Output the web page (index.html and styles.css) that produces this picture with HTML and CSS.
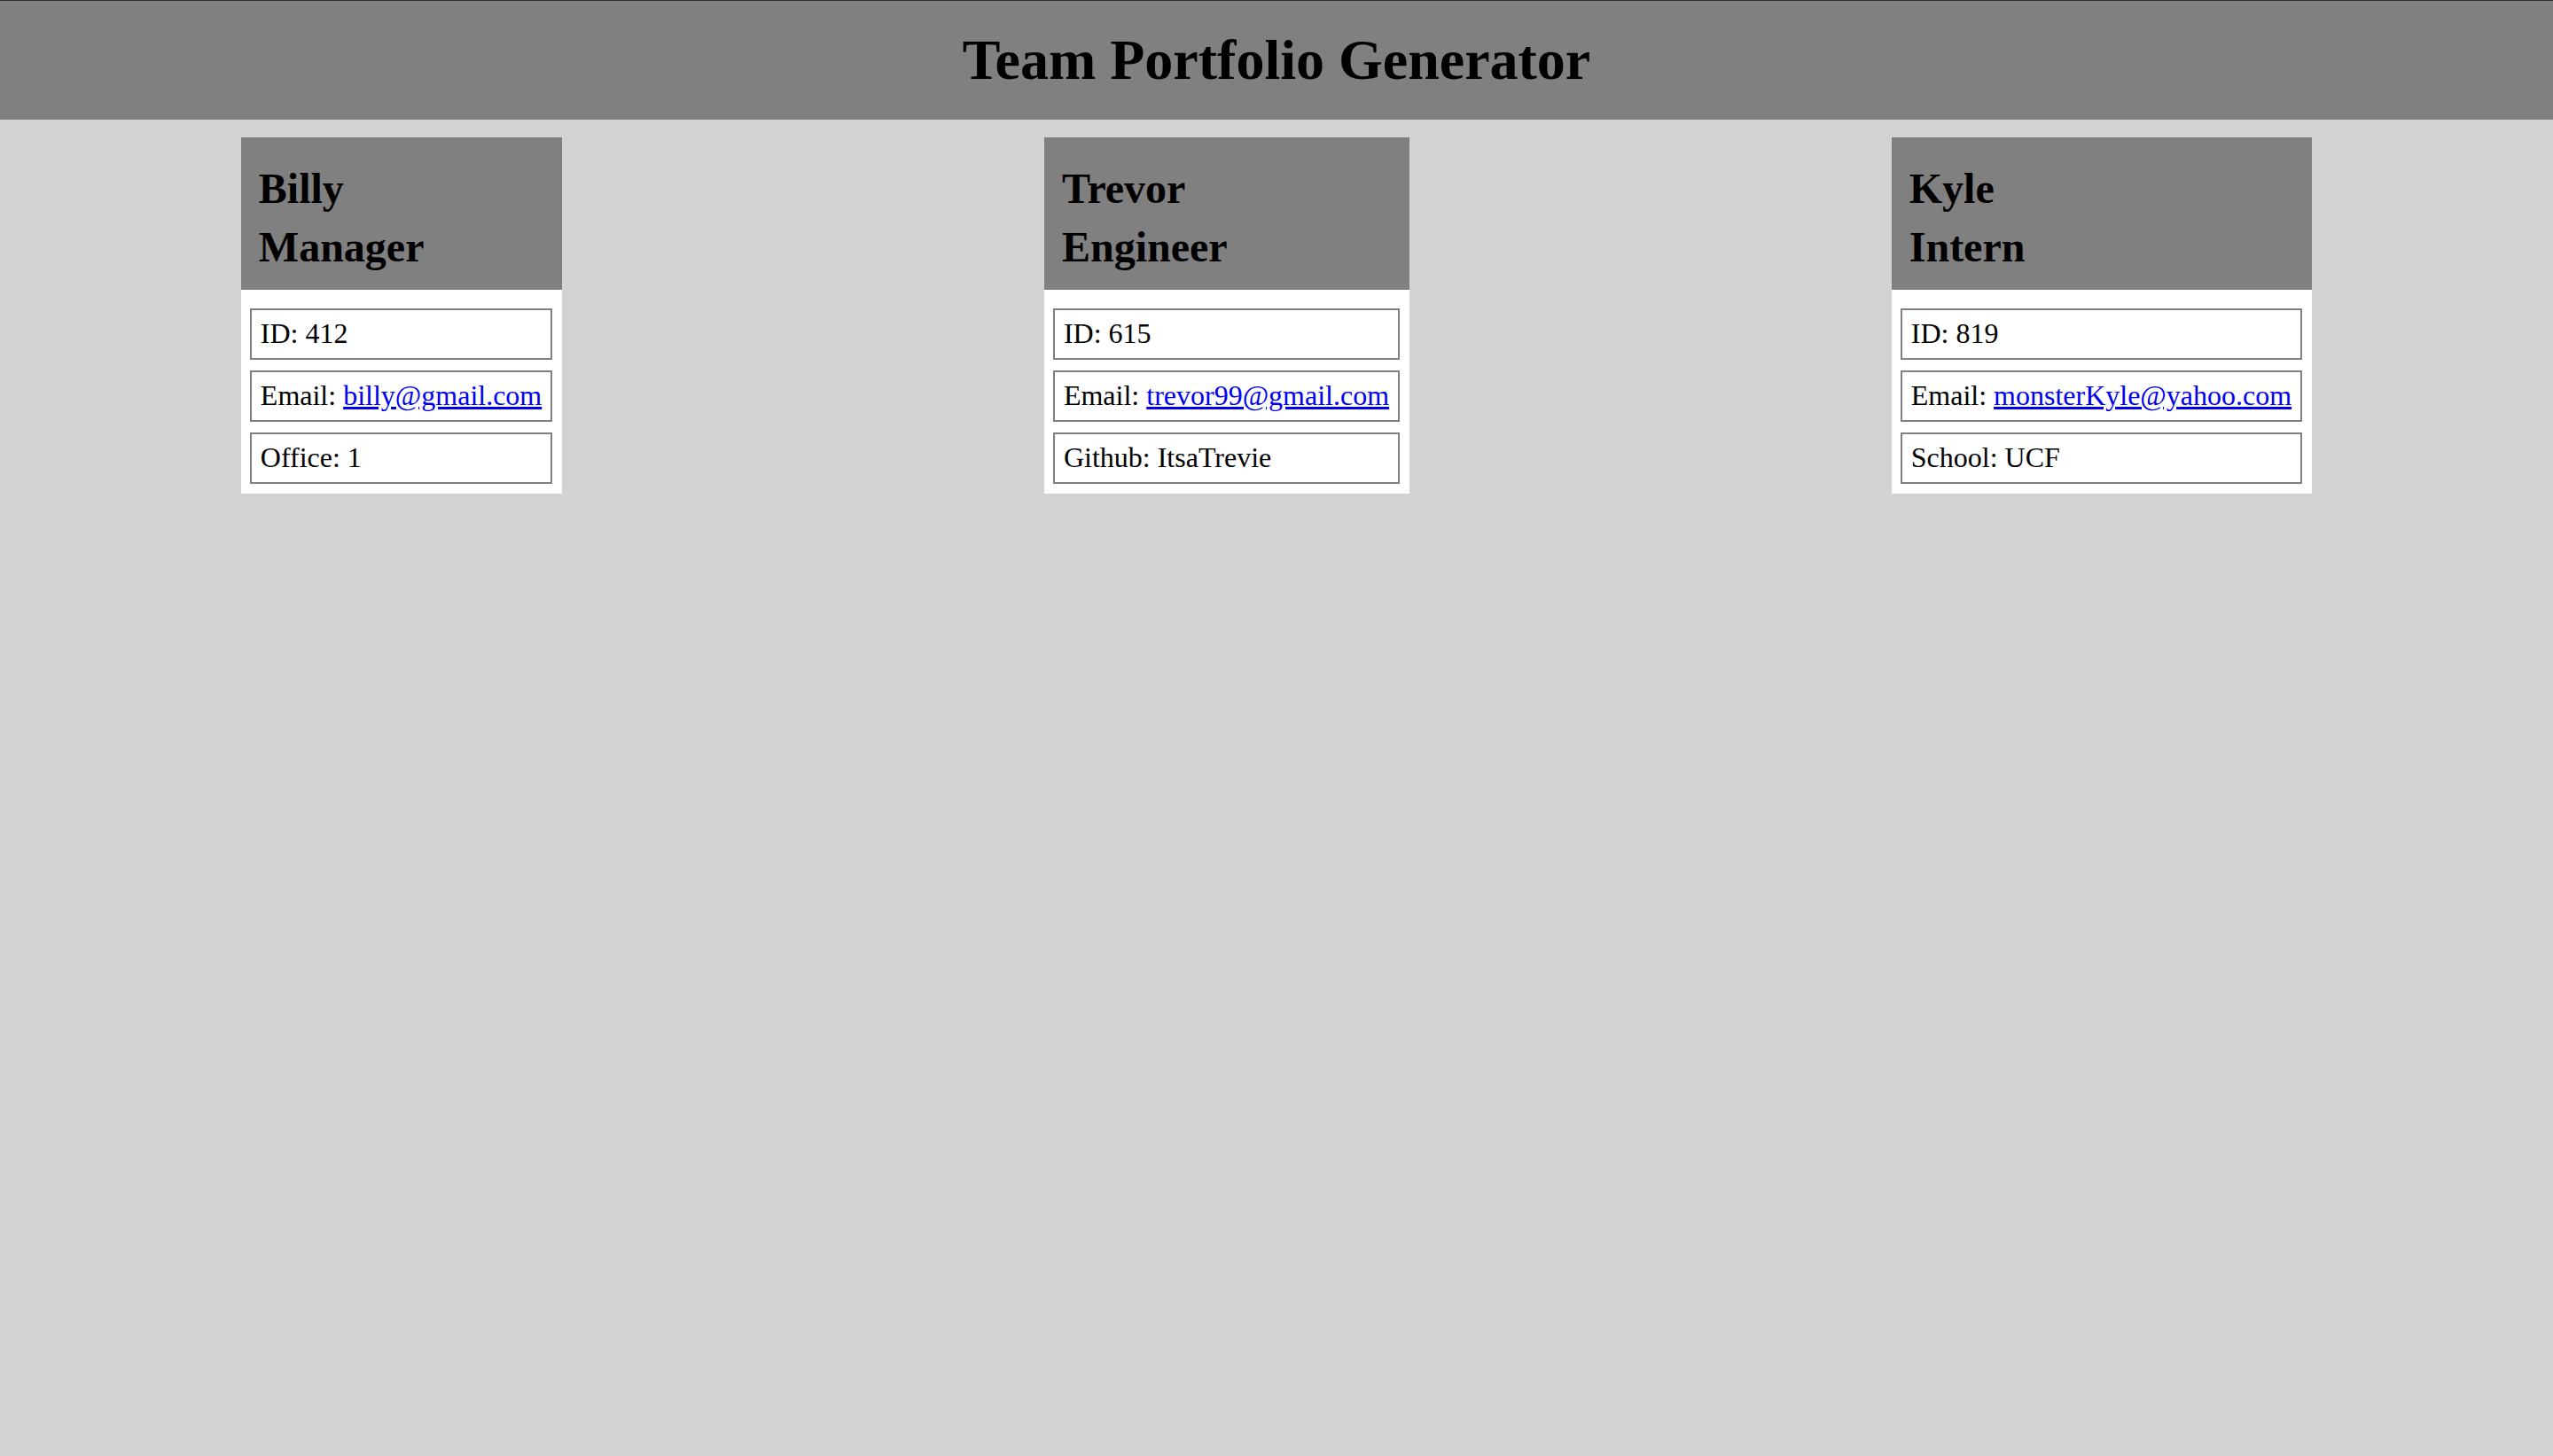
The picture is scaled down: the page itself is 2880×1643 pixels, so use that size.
FILE: index.html
```html
<!DOCTYPE html>
<html>

<head>
	<title>Team Portfolio</title>
	<link rel="stylesheet" href="styles.css">
</head>

<body>
	<header class="header">
		<h1>Team Portfolio Generator</h1>
	</header>

	<main class="team">
		<div class="card">
			<div class="card-head">
				<h2>Billy</h2>
				<h2>Manager</h2>
			</div>
			<ul class="card-list">
				<li>ID: 412</li>
				<li>Email: <a href="mailto:billy@gmail.com">billy@gmail.com</a></li>
				<li>Office: 1</li>
			</ul>
		</div>

		<div class="card">
			<div class="card-head">
				<h2>Trevor</h2>
				<h2>Engineer</h2>
			</div>
			<ul class="card-list">
				<li>ID: 615</li>
				<li>Email: <a href="mailto:trevor99@gmail.com">trevor99@gmail.com</a></li>
				<li>Github: ItsaTrevie</li>
			</ul>
		</div>

		<div class="card">
			<div class="card-head">
				<h2>Kyle</h2>
				<h2>Intern</h2>
			</div>
			<ul class="card-list">
				<li>ID: 819</li>
				<li>Email: <a href="mailto:monsterKyle@yahoo.com">monsterKyle@yahoo.com</a></li>
				<li>School: UCF</li>
			</ul>
		</div>
	</main>
</body>

</html>
```

FILE: styles.css
```css
* {
	box-sizing: border-box;
}

body {
	margin: 0;
	background: #d3d3d3;
	font-family: "Liberation Serif", "Times New Roman", serif;
	color: #000;
}

.header {
	background: #808080;
	border-top: 1px solid #2e2e2e;
	padding: 30px 0 30px;
	text-align: center;
}

.header h1 {
	margin: 0;
	font-size: 64px;
	font-weight: bold;
}

.team {
	display: flex;
	justify-content: space-around;
	align-items: flex-start;
	margin-top: 20px;
}

.card {
	background: #fff;
}

.card-head {
	background: #808080;
	padding: 25px 20px 15px;
}

.card-head h2 {
	margin: 0;
	font-size: 48px;
	line-height: 66px;
	font-weight: bold;
}

.card-list {
	list-style: none;
	margin: 0;
	padding: 21px 11px 11px 10px;
	display: flex;
	flex-direction: column;
	gap: 12px;
}

.card-list li {
	border: 2px solid #808080;
	padding: 8px 10px 9px;
	font-size: 32px;
	line-height: 37px;
	white-space: nowrap;
}

.card-list a {
	color: #0000ee;
}
```
